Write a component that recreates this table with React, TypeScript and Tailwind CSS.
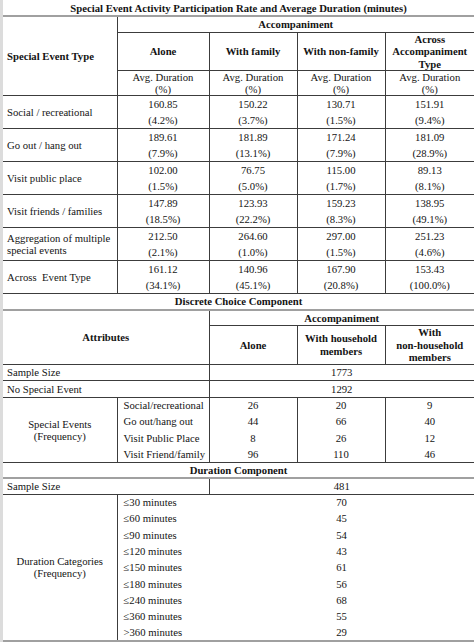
import React from "react";

const line = "border-[#3c3c3c]";
const thick = "border-b-2 border-b-[#a0a0a0]";

const eventRows = [
  { label: "Social / recreational", vals: [["160.85", "(4.2%)"], ["150.22", "(3.7%)"], ["130.71", "(1.5%)"], ["151.91", "(9.4%)"]] },
  { label: "Go out / hang out", vals: [["189.61", "(7.9%)"], ["181.89", "(13.1%)"], ["171.24", "(7.9%)"], ["181.09", "(28.9%)"]] },
  { label: "Visit public place", vals: [["102.00", "(1.5%)"], ["76.75", "(5.0%)"], ["115.00", "(1.7%)"], ["89.13", "(8.1%)"]] },
  { label: "Visit friends / families", vals: [["147.89", "(18.5%)"], ["123.93", "(22.2%)"], ["159.23", "(8.3%)"], ["138.95", "(49.1%)"]] },
  { label: "Aggregation of multiple special events", vals: [["212.50", "(2.1%)"], ["264.60", "(1.0%)"], ["297.00", "(1.5%)"], ["251.23", "(4.6%)"]] },
  { label: "Across\u00a0 Event Type", vals: [["161.12", "(34.1%)"], ["140.96", "(45.1%)"], ["167.90", "(20.8%)"], ["153.43", "(100.0%)"]] },
];

const specialEvents = [
  { name: "Social/recreational", vals: ["26", "20", "9"] },
  { name: "Go out/hang out", vals: ["44", "66", "40"] },
  { name: "Visit Public Place", vals: ["8", "26", "12"] },
  { name: "Visit Friend/family", vals: ["96", "110", "46"] },
];

const durations = [
  ["≤30 minutes", "70"],
  ["≤60 minutes", "45"],
  ["≤90 minutes", "54"],
  ["≤120 minutes", "43"],
  ["≤150 minutes", "61"],
  ["≤180 minutes", "56"],
  ["≤240 minutes", "68"],
  ["≤360 minutes", "55"],
  [">360 minutes", "29"],
];

export default function App() {
  return (
    <div className="w-[474px] h-[642px] bg-white border-l-[3px] border-[#dcdcdc] font-['Liberation_Serif',serif] text-[10.7px] text-[#141414] overflow-hidden">
      <table className="w-[471px] table-fixed border-collapse font-['Liberation_Serif',serif]">
        <colgroup>
          <col className="w-[114px]" />
          <col className="w-[92px]" />
          <col className="w-[88px]" />
          <col className="w-[88px]" />
          <col className="w-[89px]" />
        </colgroup>
        <tbody>
          {/* section 1 */}
          <tr className="h-[16px]">
            <td colSpan={5} className={`p-0 text-center font-bold leading-[14px] ${thick}`}>
              Special Event Activity Participation Rate and Average Duration (minutes)
            </td>
          </tr>
          <tr className="h-[16px]">
            <td rowSpan={3} className={`p-0 pl-[4px] font-bold border-r border-b ${line}`}>
              Special Event Type
            </td>
            <td colSpan={4} className={`p-0 text-center font-bold leading-[14px] border-b ${line}`}>
              Accompaniment
            </td>
          </tr>
          <tr className="h-[37px]">
            <td className={`p-0 text-center font-bold border-r border-b ${line}`}>Alone</td>
            <td className={`p-0 text-center font-bold border-r border-b ${line}`}>With family</td>
            <td className={`p-0 text-center font-bold border-r border-b ${line}`}>With non-family</td>
            <td className={`p-0 text-center font-bold leading-[12.5px] border-b ${line}`}>
              Across
              <br />
              Accompaniment
              <br />
              Type
            </td>
          </tr>
          <tr className="h-[25px]">
            {[0, 1, 2, 3].map((i) => (
              <td
                key={i}
                className={`p-0 text-center leading-[12px] border-b ${line} ${i < 3 ? "border-r" : ""}`}
              >
                Avg. Duration
                <br />
                (%)
              </td>
            ))}
          </tr>
          {eventRows.map((r) => (
            <tr key={r.label} className="h-[32.6px]">
              <td className={`p-0 pl-[4px] pr-1 leading-[12px] border-r border-b ${line}`}>{r.label}</td>
              {r.vals.map((v, i) => (
                <td
                  key={i}
                  className={`p-0 text-center leading-[16px] border-b ${line} ${i < 3 ? "border-r" : ""}`}
                >
                  {v[0]}
                  <br />
                  {v[1]}
                </td>
              ))}
            </tr>
          ))}

          {/* section 2 */}
          <tr className="h-[16px]">
            <td colSpan={5} className={`p-0 text-center font-bold leading-[14px] ${thick}`}>
              Discrete Choice Component
            </td>
          </tr>
          <tr className="h-[16px]">
            <td colSpan={2} rowSpan={2} className={`p-0 text-center font-bold border-r border-b ${line}`}>
              Attributes
            </td>
            <td colSpan={3} className={`p-0 text-center font-bold leading-[14px] border-b ${line}`}>
              Accompaniment
            </td>
          </tr>
          <tr className="h-[36px]">
            <td className={`p-0 text-center font-bold border-r border-b ${line}`}>Alone</td>
            <td className={`p-0 text-center font-bold leading-[12.5px] border-r border-b ${line}`}>
              With household
              <br />
              members
            </td>
            <td className={`p-0 text-center font-bold leading-[12.5px] border-b ${line}`}>
              With
              <br />
              non-household
              <br />
              members
            </td>
          </tr>
          <tr className="h-[16px]">
            <td colSpan={2} className={`p-0 pl-[4px] leading-[14px] border-r border-b ${line}`}>Sample Size</td>
            <td colSpan={3} className={`p-0 text-center leading-[14px] border-b ${line}`}>1773</td>
          </tr>
          <tr className="h-[17px]">
            <td colSpan={2} className={`p-0 pl-[4px] leading-[14px] border-r border-b ${line}`}>No Special Event</td>
            <td colSpan={3} className={`p-0 text-center leading-[14px] border-b ${line}`}>1292</td>
          </tr>
          {specialEvents.map((s, idx) => {
            const last = idx === specialEvents.length - 1;
            const b = last ? "border-b" : "";
            return (
              <tr key={s.name} className="h-[16.25px]">
                {idx === 0 && (
                  <td rowSpan={4} className={`p-0 text-center leading-[12px] border-r border-b ${line}`}>
                    Special Events
                    <br />
                    (Frequency)
                  </td>
                )}
                <td className={`p-0 pl-[6px] leading-[14px] border-r ${line} ${b}`}>{s.name}</td>
                <td className={`p-0 text-center leading-[14px] border-r ${line} ${b}`}>{s.vals[0]}</td>
                <td className={`p-0 text-center leading-[14px] border-r ${line} ${b}`}>{s.vals[1]}</td>
                <td className={`p-0 text-center leading-[14px] ${line} ${b}`}>{s.vals[2]}</td>
              </tr>
            );
          })}

          {/* section 3 */}
          <tr className="h-[16px]">
            <td colSpan={5} className={`p-0 text-center font-bold leading-[14px] ${thick}`}>
              Duration Component
            </td>
          </tr>
          <tr className="h-[16px]">
            <td colSpan={2} className={`p-0 pl-[4px] leading-[14px] border-r border-b ${line}`}>Sample Size</td>
            <td colSpan={3} className={`p-0 text-center leading-[14px] border-b ${line}`}>481</td>
          </tr>
          {durations.map(([name, n], idx) => {
            const last = idx === durations.length - 1;
            return (
              <tr key={name} className={`h-[16.3px] ${last ? thick : ""}`}>
                {idx === 0 && (
                  <td rowSpan={9} className={`p-0 text-center leading-[12px] border-r ${line} ${thick}`}>
                    Duration Categories
                    <br />
                    (Frequency)
                  </td>
                )}
                <td className={`p-0 pl-[6px] leading-[14px] ${last ? thick : ""}`}>{name}</td>
                <td colSpan={3} className={`p-0 text-center leading-[14px] ${last ? thick : ""}`}>{n}</td>
              </tr>
            );
          })}
        </tbody>
      </table>
    </div>
  );
}
